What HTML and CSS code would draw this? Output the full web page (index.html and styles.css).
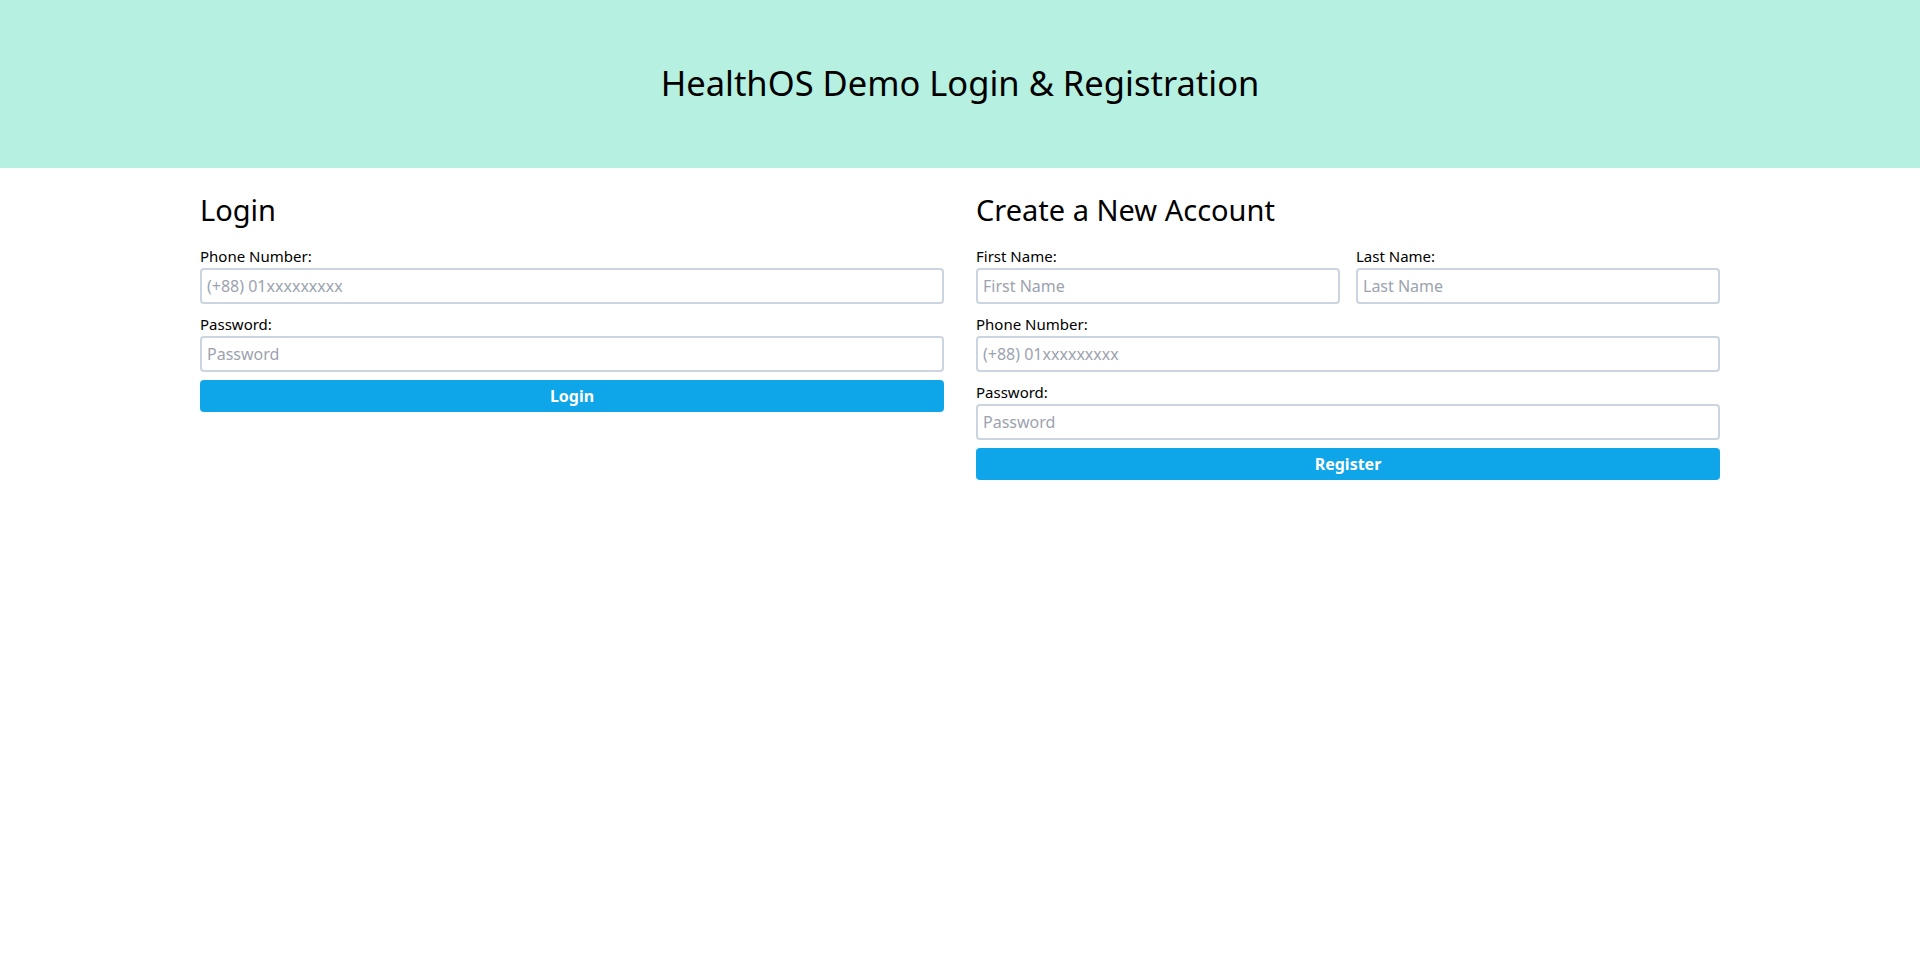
FILE: index.html
```html
<!DOCTYPE html>
<html lang="en">
<head>
<meta charset="utf-8">
<title>HealthOS Demo Login &amp; Registration</title>
<link rel="stylesheet" href="styles.css">
</head>
<body>
  <header class="site-header">
    <h1 class="site-title">HealthOS Demo Login &amp; Registration</h1>
  </header>

  <main class="container">
    <section class="panel">
      <h2 class="panel-title">Login</h2>
      <form class="form">
        <div class="field">
          <label class="label" for="login-phone">Phone Number:</label>
          <input class="input" id="login-phone" type="text" placeholder="(+88) 01xxxxxxxxx">
        </div>
        <div class="field">
          <label class="label" for="login-pass">Password:</label>
          <input class="input" id="login-pass" type="password" placeholder="Password">
        </div>
        <button class="btn" type="button">Login</button>
      </form>
    </section>

    <section class="panel">
      <h2 class="panel-title">Create a New Account</h2>
      <form class="form">
        <div class="field-row">
          <div class="field">
            <label class="label" for="reg-first">First Name:</label>
            <input class="input" id="reg-first" type="text" placeholder="First Name">
          </div>
          <div class="field">
            <label class="label" for="reg-last">Last Name:</label>
            <input class="input" id="reg-last" type="text" placeholder="Last Name">
          </div>
        </div>
        <div class="field">
          <label class="label" for="reg-phone">Phone Number:</label>
          <input class="input" id="reg-phone" type="text" placeholder="(+88) 01xxxxxxxxx">
        </div>
        <div class="field">
          <label class="label" for="reg-pass">Password:</label>
          <input class="input" id="reg-pass" type="password" placeholder="Password">
        </div>
        <button class="btn" type="button">Register</button>
      </form>
    </section>
  </main>
</body>
</html>
```

FILE: styles.css
```css
* {
  box-sizing: border-box;
}

html, body {
  margin: 0;
  padding: 0;
  background: #ffffff;
  color: #000000;
  font-family: "Noto Sans", "Open Sans", sans-serif;
  font-size: 16px;
  line-height: 24px;
}

.site-header {
  background: #b5f0e0;
  height: 168px;
  padding-top: 59px;
  text-align: center;
}

.site-title {
  margin: 0;
  font-size: 34.5px;
  line-height: 48px;
  font-weight: 400;
}

.container {
  max-width: 1536px;
  margin: 0 auto;
  padding: 24px 8px 0;
  display: grid;
  grid-template-columns: 1fr 1fr;
  gap: 32px;
}

.panel-title {
  margin: 0 0 16px;
  font-size: 29px;
  line-height: 36px;
  font-weight: 400;
}

.form {
  display: flex;
  flex-direction: column;
  gap: 8px;
}

.field-row {
  display: grid;
  grid-template-columns: 1fr 1fr;
  gap: 16px;
}

.field {
  display: flex;
  flex-direction: column;
}

.label {
  font-size: 15px;
  line-height: 24px;
}

.input {
  width: 100%;
  height: 36px;
  padding: 4px 5px;
  border: 2px solid #cbd5e1;
  border-radius: 4px;
  font-family: inherit;
  font-size: 16px;
  line-height: 24px;
  color: #111827;
  background: #ffffff;
  outline: none;
}

.input::placeholder {
  color: #9ca3af;
}

.btn {
  width: 100%;
  height: 32px;
  padding: 4px 0;
  border: none;
  border-radius: 4px;
  background: #0ea5e9;
  color: #ffffff;
  font-family: inherit;
  font-size: 16px;
  line-height: 24px;
  font-weight: 700;
  cursor: pointer;
}
```
